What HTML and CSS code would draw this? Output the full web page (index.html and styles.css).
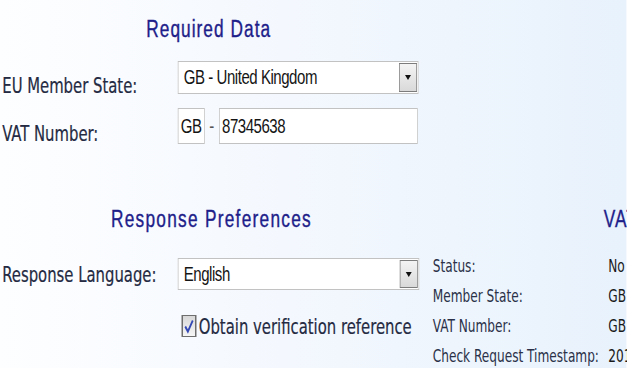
FILE: index.html
```html
<!DOCTYPE html>
<html lang="en">
<head>
<meta charset="utf-8">
<title>VAT Check</title>
<link rel="stylesheet" href="styles.css">
</head>
<body>
<div class="page">
  <section class="required">
    <h2 class="heading heading-required">Required Data</h2>
    <div class="row row-state">
      <label class="label label-low">EU Member State:</label>
      <div class="select select-state">
        <span class="select-text">GB - United Kingdom</span>
        <span class="select-btn"><span class="tri"></span></span>
      </div>
    </div>
    <div class="row row-vat">
      <label class="label label-low">VAT Number:</label>
      <div class="prefix"><span class="input-text">GB</span></div>
      <span class="dash">-</span>
      <div class="input input-vat"><span class="input-text">87345638</span></div>
    </div>
  </section>
  <div class="lower">
    <section class="prefs">
      <h2 class="heading heading-prefs">Response Preferences</h2>
      <div class="row row-lang">
        <label class="label">Response Language:</label>
        <div class="select select-lang">
          <span class="select-text">English</span>
          <span class="select-btn"><span class="tri"></span></span>
        </div>
      </div>
      <div class="row row-check">
        <span class="checkbox">
          <svg viewBox="0 0 16 19" width="16" height="19">
            <path d="M3 9.5 L6.5 14.5 L13 3.5" fill="none" stroke="#3348b5" stroke-width="2.4"/>
          </svg>
        </span>
        <span class="check-label">Obtain verification reference</span>
      </div>
    </section>
    <section class="result">
      <h2 class="heading heading-result">VAT Validation Result</h2>
      <div class="result-table">
        <div class="r-label">Status:</div><div class="r-value">No</div>
        <div class="r-label">Member State:</div><div class="r-value">GB</div>
        <div class="r-label">VAT Number:</div><div class="r-value">GB</div>
        <div class="r-label">Check Request Timestamp:</div><div class="r-value">2014</div>
      </div>
    </section>
  </div>
</div>
</body>
</html>
```
FILE: styles.css
```css
html, body {
  margin: 0;
  padding: 0;
  width: 627px;
  height: 368px;
  overflow: hidden;
}
body {
  background: linear-gradient(to right, #fdfeff 0%, #f4f8fe 45%, #e8f2fc 99.8%, #ffffff 100%);
}
.page {
  width: 836px;
  height: 368px;
  transform: scaleX(0.75);
  transform-origin: 0 0;
  padding-top: 16px;
  box-sizing: border-box;
}
.heading {
  margin: 0;
  font-family: "Liberation Sans", Arial, sans-serif;
  font-weight: normal;
  font-size: 23px;
  line-height: 26px;
  letter-spacing: 1.4px;
  color: #1e1e8a;
  -webkit-text-stroke: 0.4px #1e1e8a;
  white-space: nowrap;
}
.heading-required { padding-left: 195px; }
.heading-prefs { padding-left: 148px; letter-spacing: 1.7px; }
.heading-result { padding-left: 228px; }

.row {
  display: flex;
  align-items: center;
}
.label {
  width: 237px;
  flex: none;
  box-sizing: border-box;
  padding-left: 3px;
  font-family: "DejaVu Sans Condensed", "DejaVu Sans", sans-serif;
  font-stretch: condensed;
  font-size: 22px;
  color: #242a42;
  -webkit-text-stroke: 0.2px #242a42;
  white-space: nowrap;
}
.label-low { padding-top: 15px; }
.row-state { margin-top: 19px; height: 33px; }
.row-vat { margin-top: 14px; height: 36px; }

.select {
  display: flex;
  align-items: center;
  box-sizing: border-box;
  height: 100%;
  background: #fff;
  border: 1px solid #c2c2c2;
  border-left-width: 1.4px;
  border-right-width: 1.4px;
  padding-right: 1px;
}
.select-state { width: 321px; }
.select-lang { width: 322px; }
.select-text {
  flex: 1;
  padding-left: 7px;
  font-family: "Liberation Sans", Arial, sans-serif;
  font-size: 20px;
  letter-spacing: -0.6px;
  color: #151515;
  white-space: nowrap;
}
.select-btn {
  flex: none;
  width: 24px;
  height: calc(100% - 2px);
  box-sizing: border-box;
  border: 1.4px solid #7c7c7c;
  border-top-width: 1px;
  border-bottom-width: 1px;
  background: linear-gradient(#f4f4f4, #d9d9d9);
  display: flex;
  align-items: center;
  justify-content: center;
}
.tri {
  width: 0;
  height: 0;
  border-left: 4px solid transparent;
  border-right: 4px solid transparent;
  border-top: 5px solid #111;
}

.prefix, .input {
  box-sizing: border-box;
  height: 100%;
  background: #fff;
  border: 1px solid #c2c2c2;
  border-left-width: 1.4px;
  border-right-width: 1.4px;
  display: flex;
  align-items: center;
}
.prefix {
  width: 36px;
  justify-content: center;
}
.input-vat {
  width: 265px;
  padding-left: 3px;
}
.input-text {
  font-family: "Liberation Sans", Arial, sans-serif;
  font-size: 20px;
  letter-spacing: -0.6px;
  color: #151515;
  white-space: nowrap;
}
.dash {
  width: 19px;
  text-align: center;
  font-family: "Liberation Sans", Arial, sans-serif;
  font-size: 20px;
  color: #555;
}

.lower {
  display: flex;
  margin-top: 62px;
}
.prefs {
  width: 577px;
  flex: none;
}
.row-lang { margin-top: 26px; height: 32px; }
.row-check {
  margin-top: 25px;
  height: 22px;
  padding-left: 242px;
}
.checkbox {
  width: 20px;
  height: 22px;
  flex: none;
  box-sizing: border-box;
  border: 2px solid #6e6e6e;
  border-top-width: 1.4px;
  border-bottom-width: 1.4px;
  background: linear-gradient(#d8d8d8, #f6f6f6);
  display: flex;
  align-items: center;
  justify-content: center;
}
.checkbox svg { display: block; width: 16px; height: 19px; }
.check-label {
  margin-left: 3px;
  font-family: "DejaVu Sans Condensed", "DejaVu Sans", sans-serif;
  font-stretch: condensed;
  font-size: 22px;
  color: #242a42;
  -webkit-text-stroke: 0.2px #242a42;
  white-space: nowrap;
}

.result {
  flex: 1;
}
.result-table {
  margin-top: 18px;
  display: grid;
  grid-template-columns: 234px 1fr;
  grid-auto-rows: 30px;
  align-items: center;
  font-family: "DejaVu Sans Condensed", "DejaVu Sans", sans-serif;
  font-stretch: condensed;
  font-size: 18px;
  color: #2a3148;
  white-space: nowrap;
}
.r-value { color: #1a1a1a; }
```
